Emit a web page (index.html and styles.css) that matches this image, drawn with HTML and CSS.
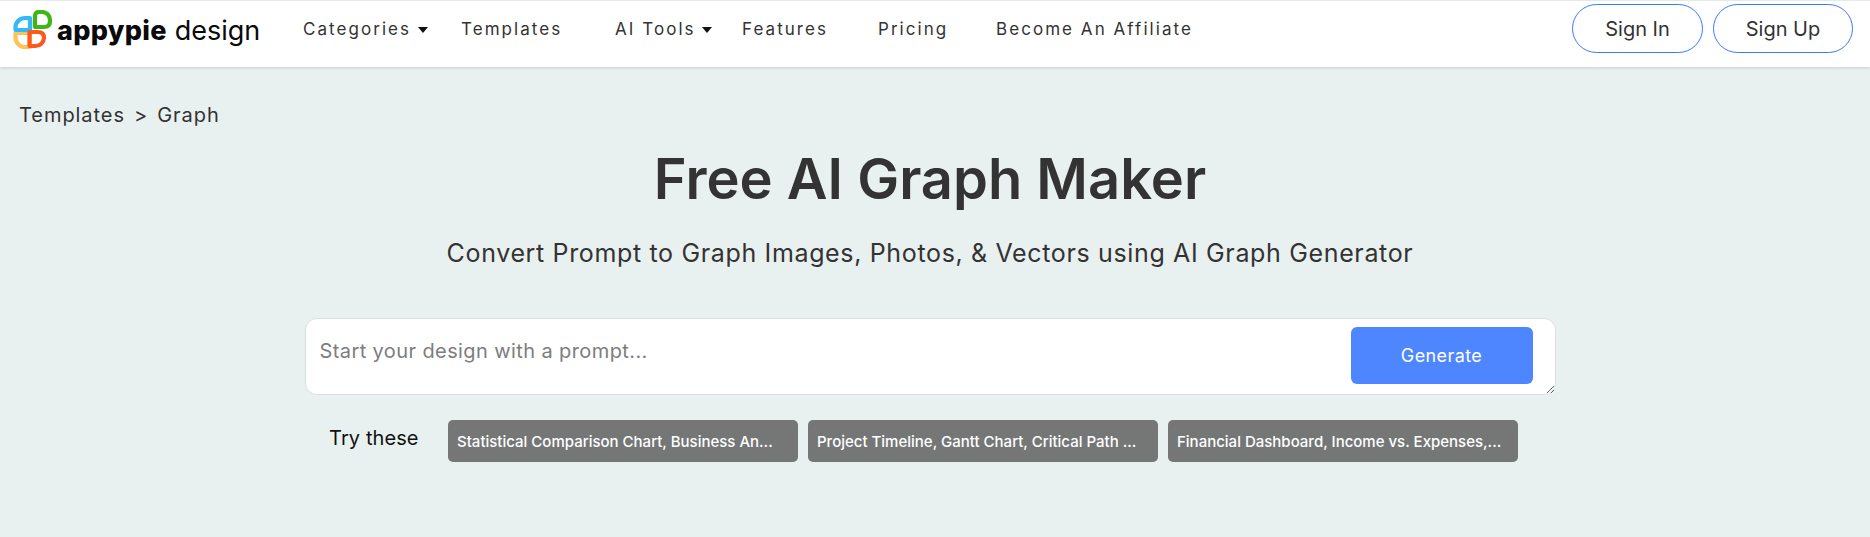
FILE: index.html
```html
<!DOCTYPE html>
<html lang="en">
<head>
    <meta charset="UTF-8">
    <meta name="viewport" content="width=device-width, initial-scale=1.0">
    <title>Free AI Graph Maker</title>
    <link rel="stylesheet" href="styles.css">
</head>
<body>
    <header class="topbar">
        <a class="logo" href="#">
            <svg class="logo-mark" width="40" height="40" viewBox="0 0 40 40" fill="none" stroke-width="4.2" stroke-linejoin="round">
                <path d="M2.5 23 H17 V37 H12 A9.5 9.5 0 0 1 2.5 27.5 Z" stroke="#fdc35a"/>
                <path d="M17 20 H2.5 V17 A9.5 9.5 0 0 1 12 8 H17 Z" stroke="#35b8fb"/>
                <path d="M16.5 22 H25 Q31 22 31 28 A8.5 8.5 0 0 1 22.5 36 H16.5 Z" stroke="#fb5a1f"/>
                <path d="M22 17 V6 Q22 2 26 2 H29 A8 8 0 0 1 37 10 V11 Q37 17 31 17 Z" stroke="#3fb618"/>
            </svg>
            <span class="logo-name">appypie</span>
            <span class="logo-sub">design</span>
        </a>
        <nav class="nav">
            <a class="nav-link categories" href="#">Categories <span class="caret"></span></a>
            <a class="nav-link templates" href="#">Templates</a>
            <a class="nav-link tools" href="#">AI Tools <span class="caret"></span></a>
            <a class="nav-link features" href="#">Features</a>
            <a class="nav-link pricing" href="#">Pricing</a>
            <a class="nav-link" href="#">Become An Affiliate</a>
        </nav>
        <div class="auth">
            <a class="pill signin" href="#">Sign In</a>
            <a class="pill signup" href="#">Sign Up</a>
        </div>
    </header>

    <main class="main">
        <div class="crumbs">
            <a href="#">Templates</a>
            <span class="crumb-sep">&gt;</span>
            <a href="#">Graph</a>
        </div>

        <h1>Free AI Graph Maker</h1>
        <p class="sub">Convert Prompt to Graph Images, Photos, &amp; Vectors using AI Graph Generator</p>

        <div class="prompt">
            <textarea placeholder="Start your design with a prompt..."></textarea>
            <button class="generate">Generate</button>
        </div>

        <div class="try">
            <span class="try-label">Try these</span>
            <a class="chip" href="#">Statistical Comparison Chart, Business An...</a>
            <a class="chip" href="#">Project Timeline, Gantt Chart, Critical Path ...</a>
            <a class="chip" href="#">Financial Dashboard, Income vs. Expenses,...</a>
        </div>
    </main>
</body>
</html>
```

FILE: styles.css
```css
* {
    margin: 0;
    padding: 0;
    box-sizing: border-box;
}

body {
    font-family: Inter, "Open Sans", sans-serif;
    min-height: 100vh;
    background-color: #e9f1f0;
    color: #333;
}

a {
    color: inherit;
    text-decoration: none;
}

.topbar {
    height: 66px;
    margin-top: 1px;
    padding: 3px 17px 0 13px;
    background-color: #fff;
    box-shadow: 0 1px 3px rgba(0, 0, 0, 0.15);
    display: flex;
    align-items: flex-start;
}

.logo {
    display: flex;
    align-items: center;
    height: 52px;
    width: 290px;
    color: #0a0a0a;
}

.logo-mark {
    flex: none;
}

.logo-name {
    font-size: 27px;
    font-weight: 800;
    letter-spacing: 0.3px;
    margin-left: 4px;
}

.logo-sub {
    font-size: 27px;
    font-weight: 400;
    margin-left: 8px;
}

.nav {
    display: flex;
    align-items: center;
    height: 50px;
    font-size: 17px;
    letter-spacing: 2.05px;
    color: #333;
}

.nav-link {
    white-space: nowrap;
}

.categories { width: 158px; }
.templates { width: 154px; }
.tools { width: 127px; }
.features { width: 136px; }
.pricing { width: 118px; }

.caret {
    display: inline-block;
    width: 0;
    height: 0;
    vertical-align: 2px;
    border-left: 5px solid transparent;
    border-right: 5px solid transparent;
    border-top: 6px solid #111;
}

.auth {
    margin-left: auto;
    display: flex;
    gap: 10px;
}

.pill {
    height: 49px;
    display: flex;
    align-items: center;
    justify-content: center;
    border: 1px solid #3b78ff;
    border-radius: 25px;
    font-size: 20px;
    color: #333;
}

.signin { width: 131px; }
.signup { width: 140px; }

.main {
    padding-right: 10px;
}

.crumbs {
    padding: 36px 0 0 19px;
    display: flex;
    align-items: center;
    gap: 9px;
    font-size: 20px;
    letter-spacing: 0.95px;
    line-height: 24px;
    color: #333;
}

h1 {
    margin-top: 17px;
    text-align: center;
    font-size: 56px;
    line-height: 70px;
    font-weight: 600;
    color: #333;
}

.sub {
    margin-top: 21px;
    text-align: center;
    font-size: 25px;
    letter-spacing: 0.65px;
    line-height: 36px;
    color: #333;
}

.prompt {
    position: relative;
    width: 1251px;
    height: 77px;
    margin: 47px auto 0;
}

.prompt textarea {
    display: block;
    width: 100%;
    height: 100%;
    padding: 18px 14px;
    border: 1px solid #dcdfdf;
    border-radius: 12px;
    outline: none;
    resize: both;
    font-family: inherit;
    font-size: 20px;
    letter-spacing: 0.4px;
    line-height: 28px;
    background-color: #fff;
}

.prompt textarea::placeholder {
    color: #7d7d7d;
}

.generate {
    position: absolute;
    top: 9px;
    right: 23px;
    width: 182px;
    height: 57px;
    border: none;
    border-radius: 6px;
    background-color: #4d86ff;
    color: #fff;
    font-family: inherit;
    font-size: 18px;
    letter-spacing: 0.4px;
}

.try {
    margin: 25px 0 0 448px;
    display: flex;
    gap: 10px;
    position: relative;
}

.try-label {
    position: absolute;
    left: -119px;
    top: 6px;
    font-size: 20px;
    letter-spacing: 0.1px;
    line-height: 24px;
    color: #111;
}

.chip {
    width: 350px;
    height: 42px;
    padding: 0 9px;
    display: flex;
    align-items: center;
    border-radius: 5px;
    background-color: #757777;
    color: #fff;
    font-size: 15px;
    font-weight: 500;
    white-space: nowrap;
    overflow: hidden;
}
```
